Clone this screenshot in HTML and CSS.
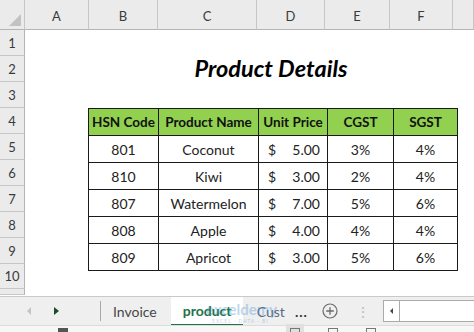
FILE: index.html
```html
<!doctype html>
<html lang="en">
    <head>
        <meta charset="UTF-8" />
        <title>Product Details</title>
        <link rel="stylesheet" href="styles.css">
    </head>
    <body>
        <div class="sheet">
            <div class="corner"><span class="corner-tri"></span></div>
            <div class="col-head">A</div>
            <div class="col-head">B</div>
            <div class="col-head">C</div>
            <div class="col-head">D</div>
            <div class="col-head">E</div>
            <div class="col-head">F</div>
            <div class="col-head"></div>

            <div class="row-head r1">1</div>
            <div class="row-head r2">2</div>
            <div class="row-head r3">3</div>
            <div class="row-head r4">4</div>
            <div class="row-head r5">5</div>
            <div class="row-head r6">6</div>
            <div class="row-head r7">7</div>
            <div class="row-head r8">8</div>
            <div class="row-head r9">9</div>
            <div class="row-head r10">10</div>
            <div class="row-head r11"></div>

            <div class="title">Product Details</div>

            <table class="products">
                <thead>
                    <tr>
                        <th class="w-hsn">HSN Code</th>
                        <th class="w-name">Product Name</th>
                        <th class="w-price">Unit Price</th>
                        <th class="w-cgst">CGST</th>
                        <th class="w-sgst">SGST</th>
                    </tr>
                </thead>
                <tbody>
                    <tr>
                        <td>801</td>
                        <td>Coconut</td>
                        <td><div class="money"><span>$</span><span>5.00</span></div></td>
                        <td>3%</td>
                        <td>4%</td>
                    </tr>
                    <tr>
                        <td>810</td>
                        <td>Kiwi</td>
                        <td><div class="money"><span>$</span><span>3.00</span></div></td>
                        <td>2%</td>
                        <td>4%</td>
                    </tr>
                    <tr>
                        <td>807</td>
                        <td>Watermelon</td>
                        <td><div class="money"><span>$</span><span>7.00</span></div></td>
                        <td>5%</td>
                        <td>6%</td>
                    </tr>
                    <tr>
                        <td>808</td>
                        <td>Apple</td>
                        <td><div class="money"><span>$</span><span>4.00</span></div></td>
                        <td>4%</td>
                        <td>4%</td>
                    </tr>
                    <tr>
                        <td>809</td>
                        <td>Apricot</td>
                        <td><div class="money"><span>$</span><span>3.00</span></div></td>
                        <td>5%</td>
                        <td>6%</td>
                    </tr>
                </tbody>
            </table>
        </div>

        <div class="tabbar">
            <div class="nav">
                <span class="nav-prev"></span>
                <span class="nav-next"></span>
            </div>
            <div class="tab-sep"></div>
            <div class="tab">Invoice</div>
            <div class="tab tab-active">product</div>
            <div class="tab tab-next">Cust</div>
            <div class="tab-more">...</div>
            <div class="tab-add">
                <svg width="16" height="16" viewBox="0 0 16 16">
                    <circle cx="8" cy="8" r="7" fill="none" stroke="#6b6b6b" stroke-width="1.2" />
                    <path d="M8 4.2v7.6M4.2 8h7.6" stroke="#6b6b6b" stroke-width="1.3" />
                </svg>
            </div>
            <div class="tab-dots">&#8942;</div>
            <div class="hscroll">
                <div class="hscroll-btn"><span class="hscroll-arrow"></span></div>
                <div class="hscroll-track"></div>
            </div>
            <div class="watermark">
                <span class="wm-logo">exceldemy</span>
                <span class="wm-sub">EXCEL · DATA · BI</span>
            </div>
        </div>

        <div class="statusbar">
            <span class="status-mark"></span>
            <div class="views">
                <span class="view-ico"></span>
                <span class="view-ico"></span>
                <span class="view-ico"></span>
            </div>
        </div>
    </body>
</html>
```

FILE: styles.css
```css
html,
body {
    margin: 0;
    padding: 0;
}

body {
    width: 474px;
    height: 332px;
    overflow: hidden;
    background: #ffffff;
    font-family: "Lato", "Open Sans", sans-serif;
    color: #222222;
    position: relative;
}

/* Spreadsheet grid */
.sheet {
    display: grid;
    grid-template-columns: 25px 64px 69px 99px 68px 65px 63px 21px;
    grid-template-rows: 30px repeat(3, 26px) repeat(6, 26px) 25px 6px;
    height: 296px;
    overflow: hidden;
}

.corner {
    background: #ebebeb;
    border-right: 1px solid #c6c6c6;
    border-bottom: 1px solid #b4b4b4;
    position: relative;
}

.corner-tri {
    position: absolute;
    right: 3px;
    bottom: 3px;
    width: 0;
    height: 0;
    border-left: 12px solid transparent;
    border-bottom: 12px solid #c2c2c2;
}

.col-head {
    background: #ebebeb;
    border-right: 1px solid #c6c6c6;
    border-bottom: 1px solid #b4b4b4;
    display: flex;
    align-items: center;
    justify-content: center;
    font-size: 13px;
    color: #3a3a3a;
    padding-top: 2px;
}

.row-head {
    grid-column: 1;
    background: #ebebeb;
    border-right: 1px solid #b4b4b4;
    border-bottom: 1px solid #c6c6c6;
    display: flex;
    align-items: center;
    justify-content: center;
    font-size: 13px;
    color: #3a3a3a;
}

.r1 { grid-row: 2; }
.r2 { grid-row: 3; }
.r3 { grid-row: 4; }
.r4 { grid-row: 5; }
.r5 { grid-row: 6; }
.r6 { grid-row: 7; }
.r7 { grid-row: 8; }
.r8 { grid-row: 9; }
.r9 { grid-row: 10; }
.r10 { grid-row: 11; }
.r11 { grid-row: 12; }

.title {
    grid-column: 3 / 8;
    grid-row: 3;
    display: flex;
    align-items: center;
    justify-content: center;
    font-size: 23.5px;
    font-weight: 700;
    font-style: italic;
    color: #000000;
    padding-bottom: 3px;
}

/* Product table */
.products {
    grid-column: 3 / 8;
    grid-row: 5 / 11;
    border-collapse: collapse;
    width: 365px;
    height: 156px;
    margin-left: -1px;
    table-layout: fixed;
}

.products th,
.products td {
    border: 1px solid #1a1a1a;
    text-align: center;
    padding: 0;
    font-size: 14px;
    color: #222222;
    height: 26px;
}

.products th {
    background: #92d050;
    font-weight: 700;
    font-size: 13.5px;
    color: #111111;
    white-space: nowrap;
}

.w-hsn { width: 69px; }
.w-name { width: 99px; }
.w-price { width: 68px; }
.w-cgst { width: 65px; }
.w-sgst { width: 63px; }

.money {
    display: flex;
    justify-content: space-between;
    padding: 0 7px 0 9px;
}

/* Sheet tabs */
.tabbar {
    height: 29px;
    background: #efefef;
    border-top: 1px solid #c9c9c9;
    display: flex;
    align-items: center;
    position: relative;
    box-sizing: border-box;
}

.nav {
    display: flex;
    align-items: center;
    gap: 23px;
    padding-left: 27px;
    width: 73px;
}

.nav-prev {
    width: 0;
    height: 0;
    border-top: 4px solid transparent;
    border-bottom: 4px solid transparent;
    border-right: 4px solid #c4c4c4;
}

.nav-next {
    width: 0;
    height: 0;
    border-top: 4px solid transparent;
    border-bottom: 4px solid transparent;
    border-left: 5px solid #1f4a2e;
}

.tab-sep {
    width: 1px;
    height: 20px;
    background: #a9a9a9;
}

.tab {
    font-size: 14px;
    color: #474747;
    height: 100%;
    display: flex;
    align-items: center;
}

.tab:nth-of-type(3) {
    padding: 0 14px 0 12px;
}

.tab-active {
    background: #ffffff;
    color: #217346;
    font-weight: 700;
    padding: 0 12px 0 12px;
    width: 48px;
    border-bottom: 2px solid #217346;
    box-sizing: content-box;
    height: 27px;
}

.tab-next {
    padding-left: 14px;
    color: #5a6b80;
}

.tab-more {
    margin-left: 10px;
    font-size: 14px;
    font-weight: 700;
    color: #333333;
    letter-spacing: 1px;
}

.tab-add {
    margin-left: 14px;
    display: flex;
}

.tab-dots {
    margin-left: 18px;
    color: #bdbdbd;
    font-size: 14px;
}

.hscroll {
    margin-left: 13px;
    flex: 1;
    height: 20px;
    display: flex;
    border: 1px solid #ababab;
    border-right: none;
    background: #ffffff;
}

.hscroll-btn {
    width: 15px;
    border-right: 1px solid #ababab;
    display: flex;
    align-items: center;
    justify-content: center;
}

.hscroll-arrow {
    width: 0;
    height: 0;
    border-top: 3px solid transparent;
    border-bottom: 3px solid transparent;
    border-right: 3px solid #444444;
}

.hscroll-track {
    flex: 1;
}

.watermark {
    position: absolute;
    left: 206px;
    top: 4px;
    width: 80px;
    display: flex;
    flex-direction: column;
    align-items: flex-start;
    opacity: 0.35;
    pointer-events: none;
}

.wm-logo {
    font-size: 15px;
    font-weight: 700;
    color: #4a8fd0;
    line-height: 17px;
}

.wm-sub {
    font-size: 5px;
    letter-spacing: 1px;
    color: #4a8fd0;
    padding-left: 6px;
}

/* Status bar */
.statusbar {
    height: 7px;
    background: #f7f7f7;
    border-top: 1px solid #dcdcdc;
    display: flex;
    align-items: flex-start;
    position: relative;
}

.status-mark {
    width: 10px;
    height: 4px;
    background: #555555;
    margin: 2px 0 0 58px;
}

.views {
    display: flex;
    gap: 28px;
    margin-left: 222px;
    padding-top: 2px;
}

.view-ico {
    width: 10px;
    height: 6px;
    border: 1px solid #777777;
    border-bottom: none;
    box-sizing: border-box;
}

.views .view-ico:first-child {
    background: #e0e0e0;
    outline: 4px solid #e0e0e0;
}
```
